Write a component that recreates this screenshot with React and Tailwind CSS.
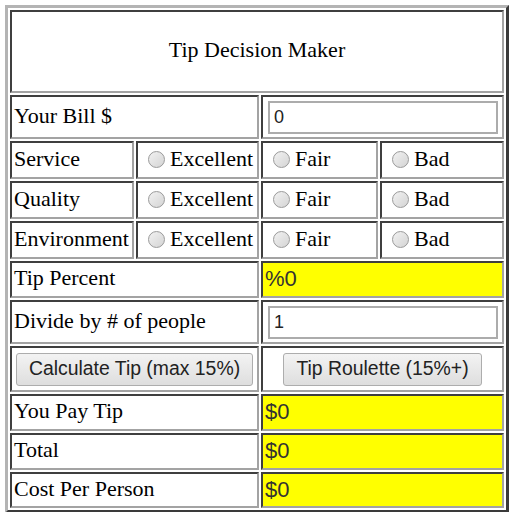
import React from "react";

const serif = "font-['Liberation_Serif',_'Times_New_Roman',_serif]";
const sans = "font-['Liberation_Sans',_Arial,_sans-serif]";

const cell =
  "border-2 border-t-[#3f3f3f] border-l-[#3f3f3f] border-b-[#a3a3a3] border-r-[#a3a3a3] px-[2px] pt-0 align-middle leading-[26px]";

const Radio = ({ label }) => (
  <span className="flex items-center">
    <span className="mt-[2px] ml-[8px] mr-[5px] h-[17px] w-[17px] shrink-0 rounded-full border border-[#9a9a9a] bg-gradient-to-br from-[#f2f2f2] to-[#d4d4d4]" />
    <span>{label}</span>
  </span>
);

const RadioRow = ({ title }) => (
  <tr className="h-[38px]">
    <td className={`${cell} pb-[3px]`}>{title}</td>
    <td className={`${cell} pb-[3px]`}>
      <Radio label="Excellent" />
    </td>
    <td className={`${cell} pb-[3px]`}>
      <Radio label="Fair" />
    </td>
    <td className={`${cell} pb-[3px]`}>
      <Radio label="Bad" />
    </td>
  </tr>
);

const Field = ({ value }) => (
  <div
    className={`ml-[3px] mr-[2px] flex h-[33px] items-center border-2 border-[#acacac] bg-white px-[4px] text-[18px] text-[#222] ${sans}`}
  >
    {value}
  </div>
);

const Button = ({ children }) => (
  <button
    className={`h-[33px] rounded-[3px] border border-[#adadad] bg-gradient-to-b from-[#f3f3f3] to-[#dedede] px-[12px] text-[19.4px] leading-none text-[#222] ${sans}`}
  >
    {children}
  </button>
);

const Yellow = ({ children }) => (
  <td colSpan={2} className={`${cell} pb-[1px] bg-[#ffff00] text-[22px] text-[#333] ${sans}`}>
    {children}
  </td>
);

const Label = ({ children }) => (
  <td colSpan={2} className={`${cell} pb-[3px]`}>
    {children}
  </td>
);

export default function App() {
  return (
    <div className={`h-[512px] w-[512px] bg-white p-[5px] text-[22px] text-black ${serif}`}>
      <table className="w-[504px] table-fixed border-separate border-spacing-[2px] border-[3px] border-t-[#b4b4b4] border-l-[#b4b4b4] border-b-[#3a3a3a] border-r-[#3a3a3a]">
        <colgroup>
          <col className="w-[124px]" />
          <col className="w-[123px]" />
          <col className="w-[117px]" />
          <col className="w-[124px]" />
        </colgroup>
        <tbody>
          <tr className="h-[83px]">
            <td colSpan={4} className={`${cell} pb-[3px] text-center`}>
              Tip Decision Maker
            </td>
          </tr>
          <tr className="h-[44px]">
            <Label>Your Bill $</Label>
            <td colSpan={2} className={`${cell} pb-0`}>
              <Field value="0" />
            </td>
          </tr>
          <RadioRow title="Service" />
          <RadioRow title="Quality" />
          <RadioRow title="Environment" />
          <tr className="h-[37px]">
            <Label>Tip Percent</Label>
            <Yellow>%0</Yellow>
          </tr>
          <tr className="h-[44px]">
            <Label>Divide by # of people</Label>
            <td colSpan={2} className={`${cell} pb-0`}>
              <Field value="1" />
            </td>
          </tr>
          <tr className="h-[46px]">
            <td colSpan={2} className={`${cell} pb-0 text-center`}>
              <Button>Calculate Tip (max 15%)</Button>
            </td>
            <td colSpan={2} className={`${cell} pb-0 text-center`}>
              <Button>Tip Roulette (15%+)</Button>
            </td>
          </tr>
          <tr className="h-[37px]">
            <Label>You Pay Tip</Label>
            <Yellow>$0</Yellow>
          </tr>
          <tr className="h-[37px]">
            <Label>Total</Label>
            <Yellow>$0</Yellow>
          </tr>
          <tr className="h-[36px]">
            <Label>Cost Per Person</Label>
            <Yellow>$0</Yellow>
          </tr>
        </tbody>
      </table>
    </div>
  );
}
